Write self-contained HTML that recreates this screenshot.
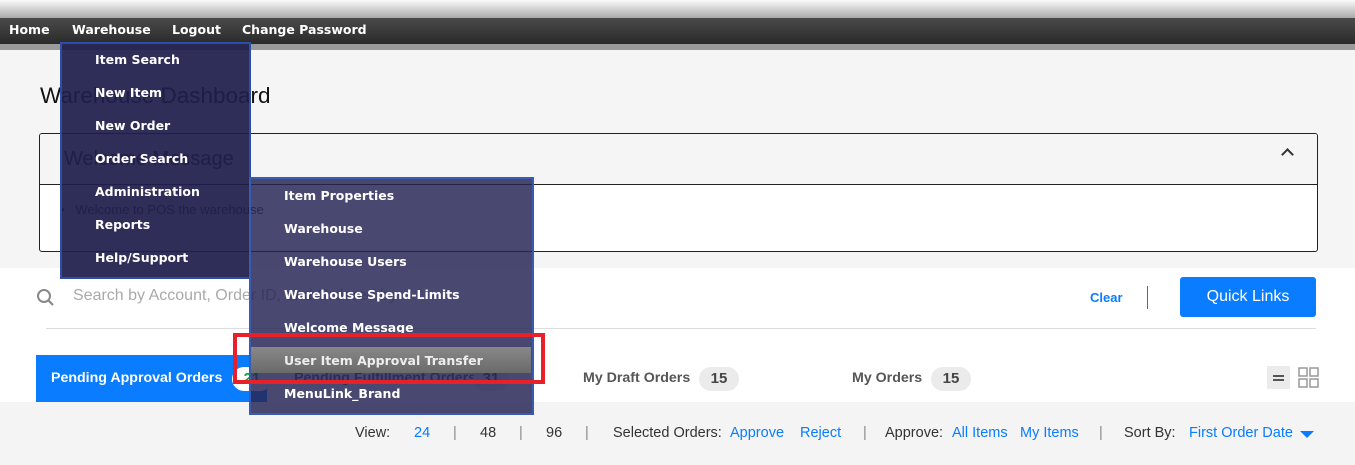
<!DOCTYPE html>
<html><head><style>
*{margin:0;padding:0;box-sizing:border-box}
body{width:1355px;height:465px;position:relative;overflow:hidden;background:#fff;font-family:"Liberation Sans",sans-serif}
.a{position:absolute}
.nav{font-family:"DejaVu Sans",sans-serif;font-weight:bold;font-size:12.5px;color:#fff}
.sf{font-family:"DejaVu Sans",sans-serif;font-weight:bold;font-size:12.5px;color:#fff;white-space:nowrap}
.t{white-space:nowrap}
.badge{position:absolute;height:24px;border-radius:12px;background:#ebebeb;color:#444;font-size:15px;font-weight:bold;text-align:center;line-height:24px}
.b{position:absolute;top:425px;font-size:14.5px;color:#333;white-space:nowrap}
.bl{color:#0a7cff}.sp{color:#888}
.tab{position:absolute;top:370px;font-size:14.2px;font-weight:bold;color:#555;white-space:nowrap}
</style></head><body>
<div class="a" style="left:0;top:0;width:1355px;height:18px;background:linear-gradient(#fafafa,#aaa)"></div>
<div class="a" style="left:0;top:18px;width:1355px;height:26px;background:linear-gradient(#4a4a4a,#2a2a2a)"></div>
<div class="a" style="left:0;top:44px;width:1355px;height:6px;background:#9a9a9a"></div>
<div class="a" style="left:0;top:50px;width:1355px;height:218px;background:#f5f5f5"></div>
<div class="a nav t" style="left:9px;top:22px">Home</div>
<div class="a nav t" style="left:72px;top:22px">Warehouse</div>
<div class="a nav t" style="left:172px;top:22px">Logout</div>
<div class="a nav t" style="left:242px;top:22px">Change Password</div>

<div class="a" style="left:39px;top:133px;width:1279px;height:119px;border:1px solid #222;border-radius:3px;background:#fff;overflow:hidden">
 <div style="height:51px;background:#f5f5f5;border-bottom:1px solid #222"></div>
</div>
<div class="a t" style="left:40px;top:83px;font-size:22.5px;color:#111">Warehouse Dashboard</div>
<div class="a t" style="left:64px;top:148px;font-size:20px;color:#222">Welcome Message</div>
<div class="a" style="left:1283px;top:150px;width:9px;height:9px;border-left:2px solid #333;border-top:2px solid #333;transform:rotate(45deg)"></div>
<div class="a t" style="left:60px;top:202px;font-size:13px;color:#333">•&nbsp;&nbsp;&nbsp;Welcome to POS the warehouse</div>

<svg class="a" style="left:36px;top:288px" width="20" height="20"><circle cx="8" cy="8" r="6" fill="none" stroke="#888" stroke-width="2"/><line x1="12.5" y1="12.5" x2="17" y2="17" stroke="#888" stroke-width="2.2"/></svg>
<div class="a t" style="left:73px;top:287px;font-size:16px;color:#aaa">Search by Account, Order ID, and Ordered by</div>
<div class="a" style="left:46px;top:328px;width:1270px;height:1px;background:#ddd"></div>
<div class="a t" style="left:1090px;top:290px;font-size:13px;font-weight:bold;color:#0a7cff">Clear</div>
<div class="a" style="left:1147px;top:286px;width:1px;height:23px;background:#666"></div>
<div class="a" style="left:1180px;top:277px;width:136px;height:40px;background:#0a7cff;border-radius:3px;color:#fff;font-size:16px;text-align:center;line-height:40px">Quick Links</div>

<div class="a" style="left:36px;top:355px;width:231px;height:47px;background:#0a7cff"></div>
<div class="tab" style="left:51px;color:#fff">Pending Approval Orders</div>
<div class="badge" style="left:232px;top:367px;width:40px;background:#fff;color:#0a3">21</div>
<div class="tab" style="left:294px">Pending Fulfillment Orders</div>
<div class="badge" style="left:473px;top:367px;width:36px">31</div>
<div class="tab" style="left:583px">My Draft Orders</div>
<div class="badge" style="left:699px;top:367px;width:40px">15</div>
<div class="tab" style="left:852px">My Orders</div>
<div class="badge" style="left:931px;top:367px;width:40px">15</div>
<div class="a" style="left:1267px;top:366px;width:23px;height:23px;background:#ebebeb"></div>
<div class="a" style="left:1273px;top:375px;width:11px;height:2px;background:#555"></div>
<div class="a" style="left:1273px;top:379px;width:11px;height:2px;background:#555"></div>
<svg class="a" style="left:1298px;top:367px" width="22" height="22" fill="none" stroke="#999" stroke-width="1.5"><rect x="1" y="1" width="8" height="8"/><rect x="12" y="1" width="8" height="8"/><rect x="1" y="12" width="8" height="8"/><rect x="12" y="12" width="8" height="8"/></svg>

<div class="a" style="left:0;top:402px;width:1355px;height:63px;background:#f4f4f4"></div>
<div class="b" style="left:355px">View:</div>
<div class="b bl" style="left:414px">24</div>
<div class="b sp" style="left:453px">|</div>
<div class="b" style="left:480px">48</div>
<div class="b sp" style="left:519px">|</div>
<div class="b" style="left:546px">96</div>
<div class="b sp" style="left:585px">|</div>
<div class="b" style="left:613px">Selected Orders:</div>
<div class="b bl" style="left:730px">Approve</div>
<div class="b bl" style="left:800px">Reject</div>
<div class="b sp" style="left:863px">|</div>
<div class="b" style="left:885px">Approve:</div>
<div class="b bl" style="left:952px">All Items</div>
<div class="b bl" style="left:1020px">My Items</div>
<div class="b sp" style="left:1099px">|</div>
<div class="b" style="left:1124px">Sort By:</div>
<div class="b bl" style="left:1189px">First Order Date</div>
<div class="a" style="left:1300px;top:431px;width:0;height:0;border-left:7px solid transparent;border-right:7px solid transparent;border-top:7px solid #0a7cff"></div>

<div class="a" style="left:60px;top:42px;width:191px;height:237px;background:rgba(30,30,75,0.93);border:2px solid #2b4fa8"></div>
<div class="a sf" style="left:95px;top:52px">Item Search</div>
<div class="a sf" style="left:95px;top:85px">New Item</div>
<div class="a sf" style="left:95px;top:118px">New Order</div>
<div class="a sf" style="left:95px;top:151px">Order Search</div>
<div class="a sf" style="left:95px;top:184px">Administration</div>
<div class="a sf" style="left:95px;top:217px">Reports</div>
<div class="a sf" style="left:95px;top:250px">Help/Support</div>

<div class="a" style="left:249px;top:177px;width:285px;height:238px;background:rgba(38,37,86,0.84);border:2px solid #3a5cb0"></div>
<div class="a" style="left:251px;top:347px;width:280px;height:26px;background:linear-gradient(#888,#6a6a6a)"></div>
<div class="a sf" style="left:284px;top:188px">Item Properties</div>
<div class="a sf" style="left:284px;top:221px">Warehouse</div>
<div class="a sf" style="left:284px;top:254px">Warehouse Users</div>
<div class="a sf" style="left:284px;top:287px">Warehouse Spend-Limits</div>
<div class="a sf" style="left:284px;top:320px">Welcome Message</div>
<div class="a sf" style="left:284px;top:353px;color:#eee">User Item Approval Transfer</div>
<div class="a sf" style="left:284px;top:386px">MenuLink_Brand</div>
<div class="a" style="left:233px;top:333px;width:312px;height:51px;border:4px solid #e8202a"></div>
</body></html>
